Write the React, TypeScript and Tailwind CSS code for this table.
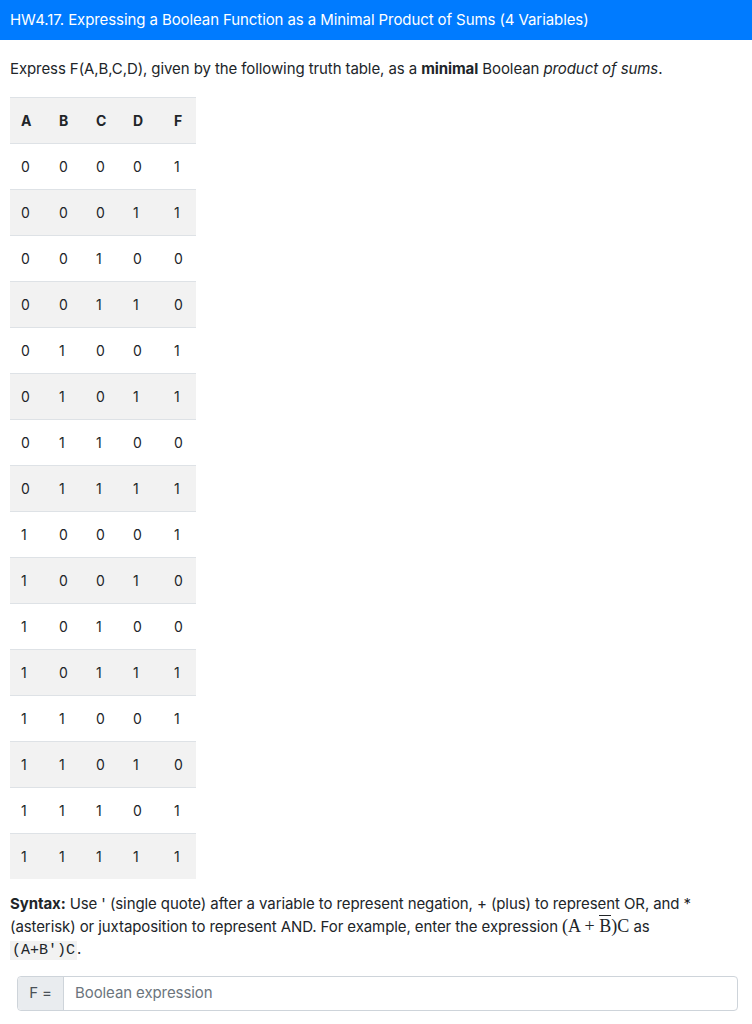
const rows = [
  [0, 0, 0, 0, 1],
  [0, 0, 0, 1, 1],
  [0, 0, 1, 0, 0],
  [0, 0, 1, 1, 0],
  [0, 1, 0, 0, 1],
  [0, 1, 0, 1, 1],
  [0, 1, 1, 0, 0],
  [0, 1, 1, 1, 1],
  [1, 0, 0, 0, 1],
  [1, 0, 0, 1, 0],
  [1, 0, 1, 0, 0],
  [1, 0, 1, 1, 1],
  [1, 1, 0, 0, 1],
  [1, 1, 0, 1, 0],
  [1, 1, 1, 0, 1],
  [1, 1, 1, 1, 1],
]

const headers = ["A", "B", "C", "D", "F"]
const cellPad = ["pl-[11px]", "pl-[12px]", "pl-[12px]", "pl-[12px]", "pl-[16px]"]

function TruthTable() {
  return (
    <div className="w-[186px] text-[14px] text-[#212529]">
      {/* Header */}
      <div className="grid grid-cols-[37px_37px_37px_37px_38px] h-[46px] items-center bg-[#f2f2f2] border-t border-[#dee2e6] font-bold">
        {headers.map((h, i) => (
          <div key={h} className={cellPad[i]}>{h}</div>
        ))}
      </div>

      {/* Rows */}
      {rows.map((r, ri) => (
        <div
          key={ri}
          className={`grid grid-cols-[37px_37px_37px_37px_38px] h-[46px] items-center border-t border-[#dee2e6] ${ri % 2 === 1 ? "bg-[#f2f2f2]" : "bg-white"}`}
        >
          {r.map((v, ci) => (
            <div key={ci} className={cellPad[ci]}>{v}</div>
          ))}
        </div>
      ))}
    </div>
  )
}

export default function App() {
  return (
    <div className="w-[752px] min-h-[1024px] bg-white text-[#212529] font-['Inter','Noto_Sans',sans-serif] tracking-[-0.09px]">
      {/* Title bar */}
      <div className="h-10 bg-[#007bff] px-[10px] flex items-center text-white text-[15px]">
        HW4.17. Expressing a Boolean Function as a Minimal Product of Sums (4 Variables)
      </div>

      <div className="px-[10px]">
        <p className="mt-[18px] text-[15px] leading-[22px]">
          Express F(A,B,C,D), given by the following truth table, as a <strong>minimal</strong> Boolean{" "}
          <em>product of sums</em>.
        </p>

        <div className="mt-[17px]">
          <TruthTable />
        </div>

        {/* Syntax help */}
        <p className="mt-[14px] w-[700px] text-[15px] leading-[22px]">
          <strong>Syntax:</strong> Use ' (single quote) after a variable to represent negation, + (plus) to represent OR,
          and * (asterisk) or juxtaposition to represent AND. For example, enter the expression{" "}
          <span className="font-['Liberation_Serif',serif] text-[18px] tracking-normal">
            (A + <span className="border-t-[1.5px] border-[#212529] leading-none">B</span>)C
          </span>{" "}
          as{" "}
          <code className="bg-[#f2f2f2] font-['Liberation_Mono',monospace] text-[15px] tracking-normal px-[2px] py-[1px]">
            (A+B')C
          </code>
          .
        </p>

        <div className="mt-[14px] ml-[7px] mr-[4px] flex h-[35px] rounded-[4px] border border-[#ced4da] text-[15px]">
          <div className="w-[46px] flex items-center justify-center bg-[#e9ecef] border-r border-[#ced4da] text-[#495057] rounded-l-[4px]">
            F =
          </div>
          <input
            className="flex-1 px-[11px] outline-none placeholder:text-[#6c757d] rounded-r-[4px]"
            placeholder="Boolean expression"
          />
        </div>
      </div>
    </div>
  )
}
